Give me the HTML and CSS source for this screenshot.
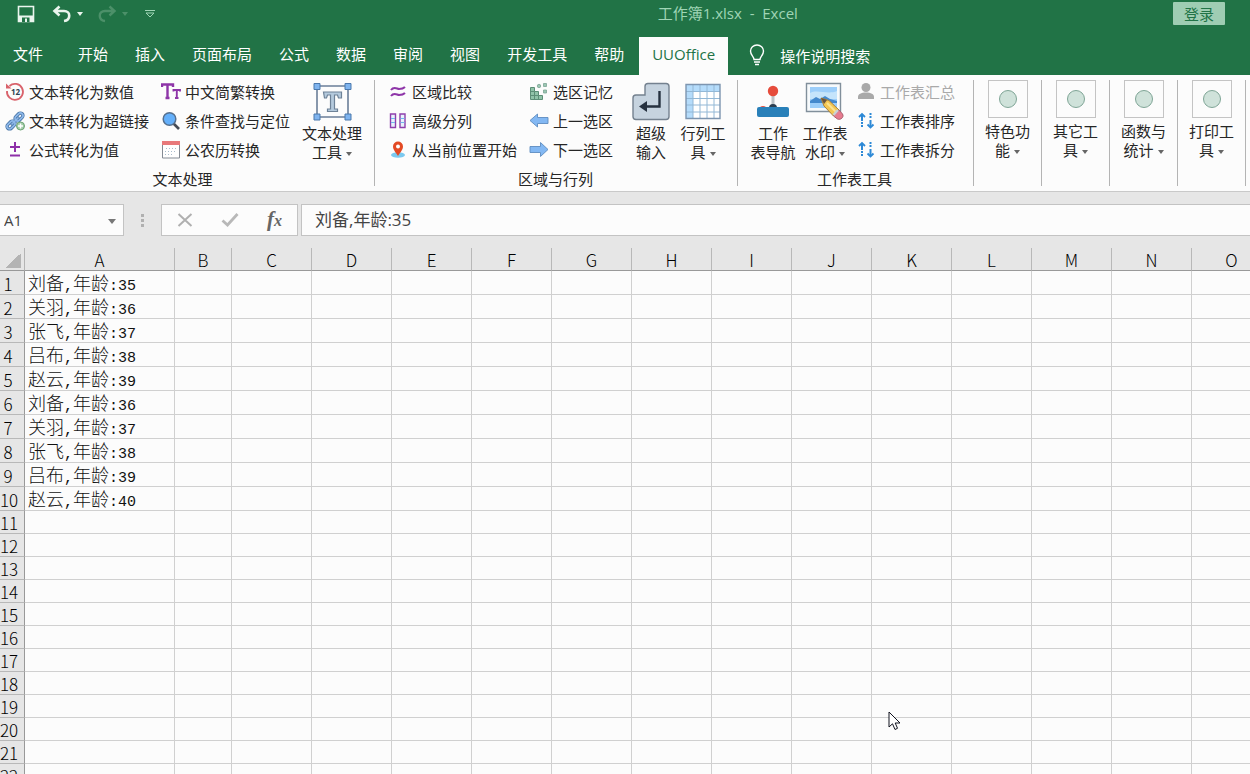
FILE: index.html
```
<!DOCTYPE html>
<html lang="zh-CN">
  <head>
    <meta charset="UTF-8" />
    <meta name="viewport" content="width=device-width, initial-scale=1.0" />
    <title>工作簿1.xlsx - Excel</title>
    <link rel="stylesheet" href="styles.css">
  </head>
  <body>
    <header class="titlebar">
      <div class="quick">
        <button class="qbtn" aria-label="保存">
          <svg width="18" height="18" viewBox="0 0 18 18"><path d="M1.500 1.500h15v15h-15z" fill="none" stroke="#eaf5ee" stroke-width="1.600"/><path d="M1 10.500h16V17H1z" fill="#eaf5ee"/><path d="M5 12.500h7.500V17H5z" fill="#217346"/><path d="M8 13.500h2V17H8z" fill="#eaf5ee"/></svg>
        </button>
        <button class="qbtn undo" aria-label="撤消">
          <svg width="20" height="18" viewBox="0 0 20 18"><path d="M7.500 1.500L2.500 6l5 4.500M3 6h9c7 0 7 9 0 10" fill="none" stroke="#eaf5ee" stroke-width="2.600"/></svg>
          <span class="caret light"></span>
        </button>
        <button class="qbtn redo" aria-label="恢复" disabled>
          <svg width="20" height="18" viewBox="0 0 20 18"><path d="M12.500 1.500l5 4.500-5 4.500M17 6H8c-7 0-7 9 0 10" fill="none" stroke="#4c9069" stroke-width="2.400"/></svg>
          <span class="caret dim"></span>
        </button>
        <button class="qbtn more" aria-label="自定义快速访问工具栏">
          <svg width="10" height="8" viewBox="0 0 10 8"><path d="M0 .5h10M1 3l4 4 4-4z" fill="none" stroke="#9fd5b5"/></svg>
        </button>
      </div>
      <div class="doc-title">工作簿1.xlsx&nbsp; - &nbsp;Excel</div>
      <button class="login">登录</button>
    </header>

    <nav class="tabs">
      <a href="#" class="tab file">文件</a>
      <a href="#" class="tab">开始</a>
      <a href="#" class="tab">插入</a>
      <a href="#" class="tab">页面布局</a>
      <a href="#" class="tab">公式</a>
      <a href="#" class="tab">数据</a>
      <a href="#" class="tab">审阅</a>
      <a href="#" class="tab">视图</a>
      <a href="#" class="tab">开发工具</a>
      <a href="#" class="tab">帮助</a>
      <a href="#" class="tab active">UUOffice</a>
      <a href="#" class="tell">
        <svg width="16" height="22" viewBox="0 0 16 22"><path d="M5 15.500c0-3-3.500-4-3.500-8.500a6.500 6 0 0 1 13 0c0 4.500-3.500 5.500-3.500 8.500zM5 18h6M6 20.500h4" fill="none" stroke="#fff" stroke-width="1.400"/></svg>
        操作说明搜索
      </a>
    </nav>

    <section class="ribbon">
      <div class="group group-text">
        <div class="group-body">
          <div class="stack">
            <button class="small">
              <svg width="20" height="20" viewBox="0 0 20 20"><path d="M4.500 4A8 8 0 1 1 2 9" fill="none" stroke="#d9626b" stroke-width="1.800"/><path d="M1 1.500v5h5.500z" fill="#d9626b"/><text x="10.500" y="13" text-anchor="middle" class="t12">12</text></svg>
              文本转化为数值
            </button>
            <button class="small">
              <svg width="20" height="20" viewBox="0 0 20 20"><g fill="none" stroke-linecap="round"><g stroke="#4a76a6" stroke-width="3.400"><rect x="9.500" y="3.500" width="9" height="5" rx="2.500" transform="rotate(-45 14 6)"/><rect x="1.500" y="11.500" width="9" height="5" rx="2.500" transform="rotate(-45 6 14)"/><path d="M7 13l6-6"/></g><g stroke="#8db8ea" stroke-width="1.700"><rect x="9.500" y="3.500" width="9" height="5" rx="2.500" transform="rotate(-45 14 6)"/><rect x="1.500" y="11.500" width="9" height="5" rx="2.500" transform="rotate(-45 6 14)"/><path d="M7 13l6-6"/></g></g><circle cx="15.500" cy="15" r="4" fill="#a5cda9" stroke="#6da474"/><path d="M15.500 12.500v5M13 15h5" stroke="#fff" stroke-width="1.400"/></svg>
              文本转化为超链接
            </button>
            <button class="small">
              <svg width="20" height="20" viewBox="0 0 20 20"><path d="M10 2v10M5 7h10M5 15.500h10" stroke="#8e30a8" stroke-width="2"/></svg>
              公式转化为值
            </button>
          </div>
          <div class="stack">
            <button class="small">
              <svg width="20" height="20" viewBox="0 0 20 20"><path d="M1 5V2.500h11V5M6.500 2.500V16M4.500 16h4" fill="none" stroke="#8e35a8" stroke-width="2.400"/><path d="M12.500 9.500V8h6.500v1.500M15.800 8v8M14 16h3.500" fill="none" stroke="#8e35a8" stroke-width="1.900"/></svg>
              中文简繁转换
            </button>
            <button class="small">
              <svg width="20" height="20" viewBox="0 0 20 20"><path d="M12 12l6 6" stroke="#454b55" stroke-width="2.600"/><circle cx="8.500" cy="8" r="6.300" fill="#64b0fb" stroke="#56708e" stroke-width="1.500"/></svg>
              条件查找与定位
            </button>
            <button class="small">
              <svg width="20" height="20" viewBox="0 0 20 20"><path d="M1.500 1.500h17v16.500h-17z" fill="#fff" stroke="#848b94"/><path d="M1 1h18v4H1z" fill="#e8797b"/><path d="M5 8.500h11M4 11.500h12M4 14.500h9" stroke="#a8bccc" stroke-dasharray="1 2"/></svg>
              公农历转换
            </button>
          </div>
          <button class="big wide">
            <svg width="40" height="40" viewBox="0 0 40 40"><path d="M5 4h31v31H5z" fill="none" stroke="#6a7e98" stroke-width="1.600"/><path d="M11.500 10h18v6h-3l-1-3h-3v14h3v2.500h-10V27h3V13h-3l-1 3h-2z" fill="#b5cadd" stroke="#6e8297" stroke-width="1.200"/><g fill="#7fb4ef" stroke="#4b78ac"><path d="M2 1.500h6v6H2zM33 1.500h6v6h-6zM2 32h6v6H2zM33 32h6v6h-6z"/></g></svg>
            <span>文本处理<br>工具<i class="caret"></i></span>
          </button>
        </div>
        <div class="group-name">文本处理</div>
      </div>

      <div class="group group-area">
        <div class="group-body">
          <div class="stack">
            <button class="small">
              <svg width="20" height="20" viewBox="0 0 20 20"><path d="M3 8c3-4 6-1 8-1s4 0 6-2M3 14c3-4 6-1 8-1s4 0 6-2" fill="none" stroke="#8e35a8" stroke-width="2"/></svg>
              区域比较
            </button>
            <button class="small">
              <svg width="20" height="20" viewBox="0 0 20 20"><path d="M2.500 3h5v13.500h-5zM12 3h5v13.500h-5z" fill="#e7f3fc" stroke="#8e3fac" stroke-width="1.400"/><path d="M3 7.500h4M3 11.500h4M12.500 7.500h4M12.500 11.500h4" stroke="#71b7ed"/></svg>
              高级分列
            </button>
            <button class="small">
              <svg width="20" height="20" viewBox="0 0 20 20"><ellipse cx="10" cy="15" rx="7" ry="2.800" fill="#7bc9ef"/><path d="M10 16C8 12.500 5 10 5 6.500a5 5 0 0 1 10 0C15 10 12 12.500 10 16z" fill="#e34a24"/><circle cx="10" cy="6.500" r="2" fill="#fff"/></svg>
              从当前位置开始
            </button>
          </div>
          <div class="stack">
            <button class="small">
              <svg width="20" height="20" viewBox="0 0 20 20"><path d="M1.500 5.500h4v4h4v4h4v4h-12zM1.500 9.500h4v8M1.500 13.500h8v4" fill="#90c3a8" stroke="#5c8e76"/><g fill="#9bc7b3" stroke="#7ca494" stroke-width=".8"><circle cx="10" cy="4" r="1.700"/><path d="M14.500 1.500h3v3h-3zM14.500 8h3v3h-3z"/></g></svg>
              选区记忆
            </button>
            <button class="small">
              <svg width="20" height="20" viewBox="0 0 20 20"><path d="M1 9.500L8.500 3v3.500H19v6H8.500V16z" fill="#83b8f3" stroke="#5d8cc0" stroke-width=".9"/></svg>
              上一选区
            </button>
            <button class="small">
              <svg width="20" height="20" viewBox="0 0 20 20"><path d="M19 9.500L11.500 2.500v4H1v6h10.500v4z" fill="#83b8f3" stroke="#5d8cc0" stroke-width=".9"/></svg>
              下一选区
            </button>
          </div>
          <button class="big">
            <svg width="40" height="40" viewBox="0 0 40 40"><path d="M17 1.500h18a3 3 0 0 1 3 3v30a3 3 0 0 1-3 3H5a3 3 0 0 1-3-3V16a3 3 0 0 1 3-3h9V4.500a3 3 0 0 1 3-3z" fill="#c6d3df" stroke="#74818f" stroke-width="1.400"/><path d="M28.500 9v15.500H13" fill="none" stroke="#26313f" stroke-width="2.400"/><path d="M8 24.500l8-5.500v11z" fill="#26313f"/></svg>
            <span>超级<br>输入</span>
          </button>
          <button class="big">
            <svg width="40" height="40" viewBox="0 0 40 40"><path d="M3 2.500h34v34H3z" fill="#fff"/><path d="M3 2.500h34v7H10v27H3z" fill="#b5dcfb"/><path d="M10 2.500v34M17 2.500v34M24 2.500v34M31 2.500v34M3 9.500h34M3 16.500h34M3 23h34M3 30h34" stroke="#93b8d6"/><path d="M3 2.500h34v34H3z" fill="none" stroke="#7d95b0" stroke-width="1.400"/></svg>
            <span>行列工<br>具<i class="caret"></i></span>
          </button>
        </div>
        <div class="group-name">区域与行列</div>
      </div>

      <div class="group group-sheet">
        <div class="group-body">
          <button class="big">
            <svg width="40" height="40" viewBox="0 0 40 40"><path d="M18.500 12h3v14h-3z" fill="#bcc3c7"/><circle cx="20" cy="9" r="5.200" fill="#e64c3c"/><path d="M7 26a3 2 0 0 1 6 0z" fill="#e64c3c"/><path d="M16 26a4 4 0 0 1 8 0z" fill="#2c3e50"/><rect x="4" y="25" width="32" height="10" rx="2" fill="#2980b9"/></svg>
            <span>工作<br>表导航</span>
          </button>
          <button class="big">
            <svg width="40" height="40" viewBox="0 0 40 40"><path d="M1.500 1.500h34v28h-34z" fill="#f7fafc" stroke="#818f9b" stroke-width="1.400"/><path d="M5 5h27v21H5z" fill="#9ccefa"/><path d="M5 11c7-4 18 2 27-2v8H5z" fill="#c5e4fb"/><path d="M5 19l6-4 4 2 5-3 5 3 7 2v2H5z" fill="#4489cd"/><path d="M16 16l8 2.500 10 9.500-5.500 6L19 24z" fill="#f3c653" stroke="#a98039"/><path d="M22 21l9 9" stroke="#fbe38f" stroke-width="2"/><path d="M16 16l6 2-3 4z" fill="#6b5640"/><path d="M34 28l3.500 4c2 3-2 6.500-5 5l-4-3z" fill="#e77b8f" stroke="#a9606d"/><path d="M33 28l-4.500 5" stroke="#c9d0d6" stroke-width="2.400"/></svg>
            <span>工作表<br>水印<i class="caret"></i></span>
          </button>
          <div class="stack">
            <button class="small" disabled>
              <svg width="20" height="20" viewBox="0 0 20 20"><circle cx="10" cy="5.500" r="4.500" fill="#a9a9a9"/><path d="M2 17v-2c0-3 3-4.500 8-4.500s8 1.500 8 4.500v2z" fill="#a9a9a9"/></svg>
              工作表汇总
            </button>
            <button class="small">
              <svg width="20" height="20" viewBox="0 0 20 20"><path d="M6 3v7M14.500 9v7" stroke="#2d89d6" stroke-width="2"/><path d="M6 11v6M14.500 2v6" stroke="#2d89d6" stroke-width="2" stroke-dasharray="2 1"/><path d="M3 6l3-3 3 3M11.500 13.500l3 3 3-3" fill="none" stroke="#2d89d6" stroke-width="1.800"/></svg>
              工作表排序
            </button>
            <button class="small">
              <svg width="20" height="20" viewBox="0 0 20 20"><path d="M6 3v7M14.500 9v7" stroke="#2d89d6" stroke-width="2"/><path d="M6 11v6M14.500 2v6" stroke="#2d89d6" stroke-width="2" stroke-dasharray="2 1"/><path d="M3 6l3-3 3 3M11.500 13.500l3 3 3-3" fill="none" stroke="#2d89d6" stroke-width="1.800"/></svg>
              工作表拆分
            </button>
          </div>
        </div>
        <div class="group-name">工作表工具</div>
      </div>

      <div class="group folded">
        <button class="fold"><span class="tile"><i class="dot"></i></span><span>特色功<br>能<i class="caret"></i></span></button>
      </div>
      <div class="group folded">
        <button class="fold"><span class="tile"><i class="dot"></i></span><span>其它工<br>具<i class="caret"></i></span></button>
      </div>
      <div class="group folded">
        <button class="fold"><span class="tile"><i class="dot"></i></span><span>函数与<br>统计<i class="caret"></i></span></button>
      </div>
      <div class="group folded">
        <button class="fold"><span class="tile"><i class="dot"></i></span><span>打印工<br>具<i class="caret"></i></span></button>
      </div>
    </section>

    <section class="formula-bar">
      <div class="name-box">
        <input type="text" value="A1" aria-label="名称框" />
        <button class="name-drop" aria-label="名称列表"><i class="caret"></i></button>
      </div>
      <div class="grip"><i></i><i></i><i></i></div>
      <div class="fx-box">
        <button aria-label="取消"><svg width="16" height="16" viewBox="0 0 16 16"><path d="M1.500 2l13 12M14.500 2l-13 12" stroke="#b0b0b0" stroke-width="2"/></svg></button>
        <button aria-label="输入"><svg width="18" height="16" viewBox="0 0 18 16"><path d="M1.500 8.500L6.500 13l10-11" fill="none" stroke="#b8b8b8" stroke-width="2.800"/></svg></button>
        <button class="fx" aria-label="插入函数">f<small>x</small></button>
      </div>
      <input class="formula" type="text" value="刘备,年龄:35" aria-label="编辑栏" />
    </section>

    <main class="sheet">
      <table>
        <thead>
          <tr id="letters">
            <th class="corner"></th>
          </tr>
        </thead>
        <tbody id="rows"></tbody>
      </table>
    </main>

    <svg class="pointer" width="14" height="21" viewBox="0 0 14 21"><path d="M1 1v15l3.500-3.200L7 18.500l2.500-1.200L7.200 12H12z" fill="#fff" stroke="#11131f"/></svg>

    <script>
      const letters = "ABCDEFGHIJKLMNO".split("");
      const data = [
        ["刘备", "年龄", 35],
        ["关羽", "年龄", 36],
        ["张飞", "年龄", 37],
        ["吕布", "年龄", 38],
        ["赵云", "年龄", 39],
        ["刘备", "年龄", 36],
        ["关羽", "年龄", 37],
        ["张飞", "年龄", 38],
        ["吕布", "年龄", 39],
        ["赵云", "年龄", 40],
      ];

      letters.forEach((letter) => {
        const th = document.createElement("th");
        th.className = "col col-" + letter.toLowerCase();
        th.textContent = letter;
        document.getElementById("letters").appendChild(th);
      });

      for (let i = 0; i < 22; i++) {
        const tr = document.createElement("tr");
        const item = data[i];
        if (item) {
          tr.className = "filled";
        }
        const th = document.createElement("th");
        th.className = "row-num";
        th.textContent = i + 1;
        tr.appendChild(th);
        letters.forEach((letter) => {
          const td = document.createElement("td");
          if (item && letter == "A") {
            td.innerHTML = `<b>${item[0]}</b>,<b>${item[1]}</b>:${item[2]}`;
          }
          tr.appendChild(td);
        });
        document.getElementById("rows").appendChild(tr);
      }
    </script>
  </body>
</html>
```
FILE: styles.css
```
* {
  box-sizing: border-box;
  padding: 0;
  margin: 0;
}
body {
  height: 100vh;
  display: flex;
  flex-direction: column;
  overflow: hidden;
  background-color: #e6e6e6;
  color: #262626;
  font-family: "Open Sans", "Noto Sans CJK SC", sans-serif;
  font-size: 15px;
}
button,
input {
  font: inherit;
  color: inherit;
  background: none;
  border: none;
}
svg {
  flex-shrink: 0;
}
a {
  text-decoration: none;
}
.caret {
  display: inline-block;
  border: 3px solid transparent;
  border-top: 4px solid #666;
  border-bottom: none;
}
.caret.light {
  border-top-color: #eaf5ee;
}
.caret.dim {
  border-top-color: #4c9069;
}

/* title bar */
.titlebar {
  height: 36px;
  flex-shrink: 0;
  display: grid;
  grid-template-columns: 3fr auto 2fr;
  align-items: start;
  background-color: #217346;
  padding: 0 25px 0 17px;
}
.quick {
  display: flex;
  align-items: center;
  height: 28px;
}
.qbtn {
  display: flex;
  align-items: center;
  gap: 5px;
}
.undo {
  margin-left: 17px;
}
.redo {
  margin-left: 14px;
}
.more {
  margin-left: 17px;
}
.doc-title {
  line-height: 26px;
  color: #9fd5b5;
}
.login {
  justify-self: end;
  width: 52px;
  height: 23px;
  margin-top: 2px;
  line-height: 22px;
  background-color: #9fcdb3;
  color: #217346;
  border-radius: 1px;
}

/* tabs */
.tabs {
  height: 39px;
  flex-shrink: 0;
  display: flex;
  gap: 3px;
  padding: 1px 0 0 1px;
  background-color: #217346;
}
.tab {
  padding: 0 12px;
  line-height: 35px;
  color: #fff;
  white-space: nowrap;
}
.file {
  margin-right: 8px;
}
.active {
  padding: 0 13px;
  background-color: #fcfcfc;
  color: #217346;
}
.tell {
  display: flex;
  align-items: center;
  gap: 15px;
  height: 36px;
  margin-left: 18px;
  color: #fff;
}

/* ribbon */
.ribbon {
  height: 117px;
  flex-shrink: 0;
  display: flex;
  padding-top: 5px;
  background-color: #fcfcfc;
  border-bottom: 1px solid #c9c9c9;
}
.group {
  flex-shrink: 0;
  height: 106px;
  border-right: 1px solid #b4b4b4;
}
.group-text {
  width: 375px;
  padding: 0 14px 0 5px;
}
.group-area {
  width: 363px;
  padding: 0 14px 0 13px;
}
.group-sheet {
  width: 236px;
  padding: 0 11px 0 9px;
}
.group-body {
  display: flex;
  height: 85px;
}
.group-name {
  text-align: center;
  line-height: 28px;
}
.stack {
  display: flex;
  flex-direction: column;
  flex-shrink: 0;
  margin-right: 12px;
}
.big + .stack {
  margin-left: 5px;
}
.small {
  display: flex;
  align-items: center;
  gap: 4px;
  height: 29px;
  flex-shrink: 0;
  padding-bottom: 6px;
  line-height: 22px;
  white-space: nowrap;
}
.small:disabled {
  color: #a9a9a9;
}
.big {
  display: flex;
  flex-direction: column;
  align-items: center;
  flex-shrink: 0;
  width: 52px;
  padding-top: 2px;
  gap: 2px;
  line-height: 19px;
  white-space: nowrap;
}
.wide {
  width: 60px;
}
.big .caret,
.fold .caret {
  margin-left: 4px;
  vertical-align: 2px;
}
.folded {
  width: 68px;
}
.fold {
  width: 100%;
  display: flex;
  flex-direction: column;
  align-items: center;
  gap: 4px;
  line-height: 19px;
}
.tile {
  display: flex;
  align-items: center;
  justify-content: center;
  width: 40px;
  height: 38px;
  border: 1px solid #c4c4c4;
}
.dot {
  width: 18px;
  height: 18px;
  border: 1px solid #7fa596;
  border-radius: 50%;
  background-color: #cfe2da;
}

/* formula bar */
.formula-bar {
  flex-shrink: 0;
  display: flex;
  height: 56px;
  padding: 12px 0;
}
.name-box {
  display: flex;
  width: 124px;
  background-color: #fcfcfc;
  border: 1px solid #c3c3c3;
  border-left: none;
}
.name-box input {
  width: 100px;
  padding-left: 4px;
  color: #444;
}
.name-drop {
  flex: 1;
  line-height: 20px;
}
.name-drop .caret {
  border-width: 5px 4px 0;
  border-top-color: #777;
  vertical-align: middle;
}
.grip {
  width: 37px;
  display: flex;
  flex-direction: column;
  align-items: center;
  justify-content: center;
  gap: 2px;
}
.grip i {
  width: 3px;
  height: 3px;
  background-color: #b0b0b0;
}
.fx-box {
  display: flex;
  align-items: center;
  width: 137px;
  background-color: #fcfcfc;
  border: 1px solid #c3c3c3;
}
.fx-box button {
  flex: 1;
  display: flex;
  align-items: center;
  justify-content: center;
}
.fx-box .fx {
  font: italic bold 21px "Liberation Serif", serif;
  line-height: 28px;
  color: #666;
  align-items: baseline;
}
.fx small {
  font-size: 16px;
}
.formula {
  flex: 1;
  min-width: 0;
  margin-left: 3px;
  padding: 0 13px 3px;
  background-color: #fcfcfc;
  border: 1px solid #c3c3c3;
  border-right: none;
  font-size: 17px;
  color: #444;
}

/* grid */
.sheet {
  flex: 1;
  min-height: 0;
  overflow: hidden;
}
table {
  table-layout: fixed;
  width: 1272px;
  border-spacing: 0;
  background-color: #fcfcfc;
}
th {
  font-weight: 300;
  font-family: "Noto Sans CJK SC", sans-serif;
  font-size: 17px;
  line-height: 18px;
  padding-top: 2px;
  color: #000;
  background-color: #e6e6e6;
}
.corner {
  width: 25px;
  height: 23px;
  border-right: 1px solid #b4b4b4;
  border-bottom: 1px solid #999;
  background: linear-gradient(135deg, transparent 50%, #b4b4b4 50%) 6px 5px / 15px 15px no-repeat #e6e6e6;
}
.col {
  width: 80px;
  border-right: 1px solid #b8b8b8;
  border-bottom: 1px solid #999;
}
.col-a {
  width: 150px;
}
.col-b {
  width: 57px;
}
.row-num {
  height: 23px;
  padding-right: 8px;
  border-right: 1px solid #999;
  border-bottom: 1px solid #b8b8b8;
}
td {
  border-right: 1px solid #d0d0d0;
  border-bottom: 1px solid #d0d0d0;
  padding: 6px 0 0 3px;
  line-height: 14px;
  font-family: "Liberation Mono", "Noto Sans CJK SC", monospace;
  color: #111;
  white-space: nowrap;
}
td b {
  font-weight: 300;
  font-size: 18px;
}
.filled .row-num {
  height: 24px;
}

/* mouse pointer over the grid */
.pointer {
  position: absolute;
  left: 888px;
  top: 711px;
}
.t12 {
  font: bold 8px "Open Sans", sans-serif;
  fill: #2d3f50;
}
```
